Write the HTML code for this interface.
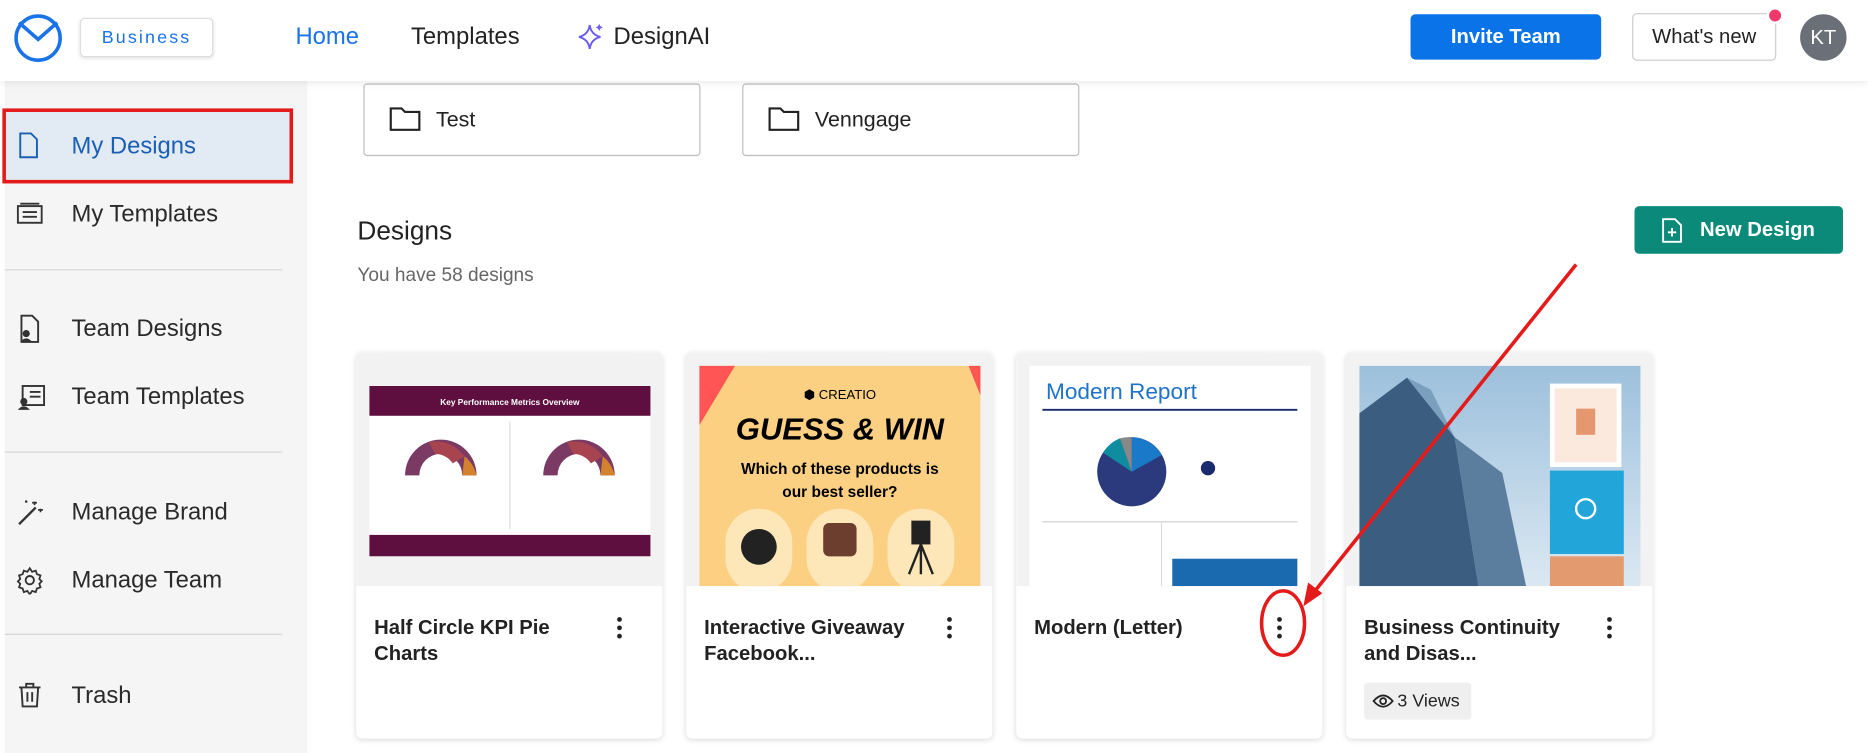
<!DOCTYPE html>
<html><head><meta charset="utf-8"><style>
html,body{margin:0;padding:0;width:1868px;height:753px;overflow:hidden;background:#fff;font-family:"Liberation Sans",sans-serif}
#w{position:absolute;left:0;top:0;width:1568px;height:632px;transform:scale(1.19133);transform-origin:0 0;background:#fff}
.a{position:absolute}
.hdr{left:0;top:0;width:1568px;height:68px;background:#fff;box-shadow:0 2px 6px rgba(0,0,0,.08);z-index:2}
.nav{font-size:20px;color:#222;top:20px}
.side{left:4px;top:68px;width:254px;height:564px;background:#f5f5f5}
.it{left:60px;font-size:20px;color:#2a2a2a}
.sep{left:4px;width:233px;height:1px;background:#d6d6d6}
.fold{top:70px;width:281px;height:59px;border:1px solid #bdbdbd;border-radius:3px;background:#fff}
.fold span{position:absolute;left:60px;top:19px;font-size:18px;color:#222}
.card{top:296px;width:257px;height:324px;background:#fff;border-radius:5px;box-shadow:0 1px 5px rgba(0,0,0,.15);overflow:hidden}
.th{position:absolute;left:0;top:0;width:257px;height:196px;background:#f2f2f2}
.ti{position:absolute;left:15px;top:220px;font-size:17px;font-weight:bold;color:#222;line-height:22px;width:190px}
.kb{position:absolute;left:219px;top:222px;width:4px}
.kb i{display:block;width:4px;height:4px;border-radius:2px;background:#222;margin-bottom:3px}
</style></head><body><div id="w">
<div class="a hdr">
 <svg class="a" style="left:11px;top:11px" width="42" height="42" viewBox="0 0 42 42"><circle cx="21" cy="21" r="18.5" fill="none" stroke="#1a73e8" stroke-width="3"/><path d="M5 8 L21 22 L37 8" fill="none" stroke="#1a73e8" stroke-width="3"/></svg>
 <div class="a" style="left:67px;top:15px;width:110px;height:31px;border:1px solid #ddd;border-radius:4px;box-shadow:0 1px 3px rgba(0,0,0,.12);text-align:center;line-height:31px;color:#1a73e8;font-size:15px;letter-spacing:1.8px">Business</div>
 <div class="a nav" style="left:248px;color:#1a73e8">Home</div>
 <div class="a nav" style="left:345px">Templates</div>
 <svg class="a" style="left:482px;top:18px" width="26" height="26" viewBox="0 0 26 26"><path d="M13 3 Q14 11 22 13 Q14 15 13 23 Q12 15 4 13 Q12 11 13 3Z" fill="none" stroke="#6a5cf0" stroke-width="1.6"/><path d="M21 2 l1 2 2 1 -2 1 -1 2 -1-2 -2-1 2-1z" fill="#6a5cf0"/></svg>
 <div class="a nav" style="left:515px">DesignAI</div>
 <div class="a" style="left:1184px;top:12px;width:160px;height:38px;background:#0a73e8;border-radius:4px;color:#fff;font-weight:bold;font-size:17px;text-align:center;line-height:38px">Invite Team</div>
 <div class="a" style="left:1370px;top:11px;width:119px;height:38px;border:1px solid #ccc;border-radius:4px;color:#222;font-size:17px;text-align:center;line-height:38px">What's new</div>
 <div class="a" style="left:1483px;top:6px;width:14px;height:14px;border-radius:50%;background:#f0386b;border:2px solid #fff;box-sizing:border-box"></div>
 <div class="a" style="left:1511px;top:12px;width:39px;height:39px;border-radius:50%;background:#6b7078;color:#fff;font-size:17px;text-align:center;line-height:39px">KT</div>
</div>
<div class="a side"></div>
<div class="a" style="left:2px;top:91px;width:238px;height:57px;background:#e2ebf4;border:3px solid #e31b1b"></div>
<svg class="a" style="left:15px;top:111px" width="18" height="22" viewBox="0 0 18 22"><path d="M2 1h9l5 5v15H2z" fill="none" stroke="#1a5fb4" stroke-width="1.6"/></svg>
<div class="a it" style="top:112px;color:#1a5fb4">My Designs</div>
<svg class="a" style="left:14px;top:170px" width="22" height="18" viewBox="0 0 22 18"><rect x="1" y="3" width="20" height="14" fill="none" stroke="#333" stroke-width="1.6"/><path d="M3 1h16M5 8h12M5 12h12" stroke="#333" stroke-width="1.6"/></svg>
<div class="a it" style="top:169px">My Templates</div>
<div class="a sep" style="top:226px"></div>
<svg class="a" style="left:15px;top:264px" width="20" height="24" viewBox="0 0 20 24"><path d="M3 1h9l5 5v17H3z" fill="none" stroke="#333" stroke-width="1.6"/><circle cx="7" cy="16" r="3" fill="#333"/><path d="M2 23q5-6 10 0" fill="#333"/></svg>
<div class="a it" style="top:265px">Team Designs</div>
<svg class="a" style="left:14px;top:321px" width="24" height="24" viewBox="0 0 24 24"><rect x="5" y="3" width="18" height="16" fill="none" stroke="#333" stroke-width="1.6"/><path d="M11 8h9M11 12h9" stroke="#333" stroke-width="1.6"/><circle cx="6" cy="16" r="3" fill="#333"/><path d="M1 23q5-6 10 0" fill="#333"/></svg>
<div class="a it" style="top:322px">Team Templates</div>
<div class="a sep" style="top:379px"></div>
<svg class="a" style="left:14px;top:418px" width="24" height="24" viewBox="0 0 24 24"><path d="M2 22L16 8" stroke="#333" stroke-width="2"/><path d="M15 3v3M13 4h4M20 9v3M18 10h4M8 2v2M7 3h2" stroke="#333" stroke-width="1.4"/></svg>
<div class="a it" style="top:419px">Manage Brand</div>
<svg class="a" style="left:13px;top:475px" width="24" height="24" viewBox="0 0 24 24"><circle cx="12" cy="12" r="3.5" fill="none" stroke="#333" stroke-width="1.6"/><path d="M12 2l2 3 3-1 1 3 3 1-1 3 2 2-2 2 1 3-3 1-1 3-3-1-2 3-2-3-3 1-1-3-3-1 1-3-2-2 2-2-1-3 3-1 1-3 3 1z" fill="none" stroke="#333" stroke-width="1.5"/></svg>
<div class="a it" style="top:476px">Manage Team</div>
<div class="a sep" style="top:532px"></div>
<svg class="a" style="left:15px;top:572px" width="20" height="22" viewBox="0 0 20 22"><path d="M1 5h18M7 5V2h6v3M3 5l1 16h12l1-16M8 9v8M12 9v8" fill="none" stroke="#333" stroke-width="1.6"/></svg>
<div class="a it" style="top:573px">Trash</div>

<div class="a fold" style="left:305px"><svg class="a" style="left:20px;top:18px" width="28" height="22" viewBox="0 0 28 22"><path d="M2 2h9l3 3h12v15H2z" fill="none" stroke="#222" stroke-width="1.8"/></svg><span>Test</span></div>
<div class="a fold" style="left:623px"><svg class="a" style="left:20px;top:18px" width="28" height="22" viewBox="0 0 28 22"><path d="M2 2h9l3 3h12v15H2z" fill="none" stroke="#222" stroke-width="1.8"/></svg><span>Venngage</span></div>
<div class="a" style="left:300px;top:181px;font-size:22px;color:#222">Designs</div>
<div class="a" style="left:300px;top:223px;font-size:16px;color:#666">You have 58 designs</div>
<div class="a" style="left:1372px;top:173px;width:175px;height:40px;background:#0b8a79;border-radius:4px;color:#fff;font-weight:bold;font-size:17px;line-height:40px"><svg class="a" style="left:23px;top:10px" width="18" height="21" viewBox="0 0 18 21"><path d="M1 1h10l5 5v14H1z M5 12h7M8.5 8.5v7" fill="none" stroke="#fff" stroke-width="1.6"/></svg><span style="position:absolute;left:55px">New Design</span></div>

<div class="a card" style="left:299px"><div class="th"><svg style="position:absolute;left:11px;top:28px" width="236" height="143" viewBox="0 0 236 143"><rect width="236" height="143" rx="3" fill="#fff"/><rect width="236" height="25" fill="#5e0f3f"/><text x="118" y="16" font-size="7" fill="#fff" text-anchor="middle" font-weight="bold" font-family="Liberation Sans">Key Performance Metrics Overview</text><rect y="125" width="236" height="18" fill="#5e0f3f"/><path d="M30 75a30 30 0 0 1 60 0h-12a18 18 0 0 0-36 0z" fill="#7a3a63"/><path d="M50 47a30 30 0 0 1 30 12l-10 6a18 18 0 0 0-15-8z" fill="#a84450"/><path d="M146 75a30 30 0 0 1 60 0h-12a18 18 0 0 0-36 0z" fill="#7a3a63"/><path d="M166 47a30 30 0 0 1 30 12l-10 6a18 18 0 0 0-15-8z" fill="#a84450"/><path d="M80 59a30 30 0 0 1 10 16h-12z M196 59a30 30 0 0 1 10 16h-12z" fill="#d5822e"/><line x1="118" y1="30" x2="118" y2="120" stroke="#ddd"/></svg></div><div class="ti">Half Circle KPI Pie Charts</div><div class="kb"><i></i><i></i><i></i></div></div>
<div class="a card" style="left:576px"><div class="th"><svg style="position:absolute;left:11px;top:11px" width="236" height="185" viewBox="0 0 236 185"><rect width="236" height="185" fill="#fbd083"/><path d="M0 0h30L0 50z M236 0v25l-10-25z" fill="#f55"/><text x="118" y="28" font-size="11" text-anchor="middle" font-family="Liberation Sans">⬢ CREATIO</text><text x="118" y="62" font-size="26" font-weight="bold" font-style="italic" text-anchor="middle" font-family="Liberation Sans">GUESS &amp; WIN</text><text x="118" y="91" font-size="13" font-weight="bold" text-anchor="middle" font-family="Liberation Sans">Which of these products is</text><text x="118" y="110" font-size="13" font-weight="bold" text-anchor="middle" font-family="Liberation Sans">our best seller?</text><rect x="22" y="120" width="56" height="70" rx="28" fill="#fde6b8"/><rect x="90" y="120" width="56" height="70" rx="28" fill="#fde6b8"/><rect x="158" y="120" width="56" height="70" rx="28" fill="#fde6b8"/><circle cx="50" cy="152" r="15" fill="#222"/><rect x="104" y="132" width="28" height="28" rx="5" fill="#6b3e2e"/><rect x="178" y="130" width="16" height="20" fill="#222"/><path d="M186 150l-10 25M186 150l10 25M186 150v25" stroke="#222" stroke-width="2"/></svg></div><div class="ti">Interactive Giveaway Facebook...</div><div class="kb"><i></i><i></i><i></i></div></div>
<div class="a card" style="left:853px"><div class="th"><svg style="position:absolute;left:11px;top:11px" width="236" height="185" viewBox="0 0 236 185"><rect width="236" height="185" fill="#fff"/><text x="14" y="28" font-size="19" fill="#1f73c9" font-family="Liberation Sans">Modern Report</text><line x1="11" y1="37" x2="225" y2="37" stroke="#1a2a6c" stroke-width="1.5"/><circle cx="86" cy="89" r="29" fill="#2a3a7c"/><path d="M86 89L86 60a29 29 0 0 1 25 15z" fill="#1a7ac9"/><path d="M86 89L62 73a29 29 0 0 1 14-12z" fill="#0e8da0"/><path d="M86 89L76 61a29 29 0 0 1 10-1z" fill="#888"/><circle cx="150" cy="86" r="6" fill="#1a2a6c"/><line x1="11" y1="131" x2="225" y2="131" stroke="#ccc"/><line x1="111" y1="131" x2="111" y2="185" stroke="#ddd"/><rect x="120" y="162" width="105" height="23" fill="#1a6ab0"/></svg></div><div class="ti">Modern (Letter)</div><div class="kb"><i></i><i></i><i></i></div></div>
<div class="a card" style="left:1130px"><div class="th"><svg style="position:absolute;left:11px;top:11px" width="236" height="185" viewBox="0 0 236 185"><defs><linearGradient id="s" x1="0" y1="0" x2="0" y2="1"><stop offset="0" stop-color="#9cc0dc"/><stop offset="1" stop-color="#dbe8f2"/></linearGradient></defs><rect width="236" height="185" fill="url(#s)"/><path d="M0 40L40 10 80 60 100 185H0z" fill="#3a5d80"/><path d="M80 60L120 90 140 185H100z" fill="#5b7d9e"/><path d="M40 10L60 20 80 60z" fill="#7b9fbf"/><rect x="160" y="15" width="60" height="70" fill="#fff"/><rect x="164" y="19" width="52" height="62" fill="#fbe9de"/><rect x="182" y="36" width="16" height="22" fill="#e59870"/><rect x="160" y="88" width="62" height="70" fill="#22a5d8"/><circle cx="190" cy="120" r="8" fill="none" stroke="#fff" stroke-width="2"/><rect x="160" y="160" width="62" height="25" fill="#e39a6e"/></svg></div><div class="ti">Business Continuity and Disas...</div><div class="kb"><i></i><i></i><i></i></div><div style="position:absolute;left:15px;top:277px;width:90px;height:31px;background:#efefef;border-radius:3px;font-size:15px;line-height:31px;color:#222"><svg style="position:absolute;left:7px;top:9px" width="18" height="13" viewBox="0 0 18 13"><path d="M1 6.5Q9-3 17 6.5Q9 16 1 6.5z" fill="none" stroke="#222" stroke-width="1.5"/><circle cx="9" cy="6.5" r="2.5" fill="none" stroke="#222" stroke-width="1.5"/></svg><span style="position:absolute;left:28px">3 Views</span></div></div>

<svg class="a" style="left:0;top:0;z-index:3" width="1568" height="632"><line x1="1323" y1="222" x2="1103" y2="497" stroke="#e31b1b" stroke-width="3"/><path d="M1094 509l4-20 12 9z" fill="#e31b1b"/><ellipse cx="1077" cy="523" rx="18" ry="27" fill="none" stroke="#e31b1b" stroke-width="3"/></svg>
</div></body></html>
